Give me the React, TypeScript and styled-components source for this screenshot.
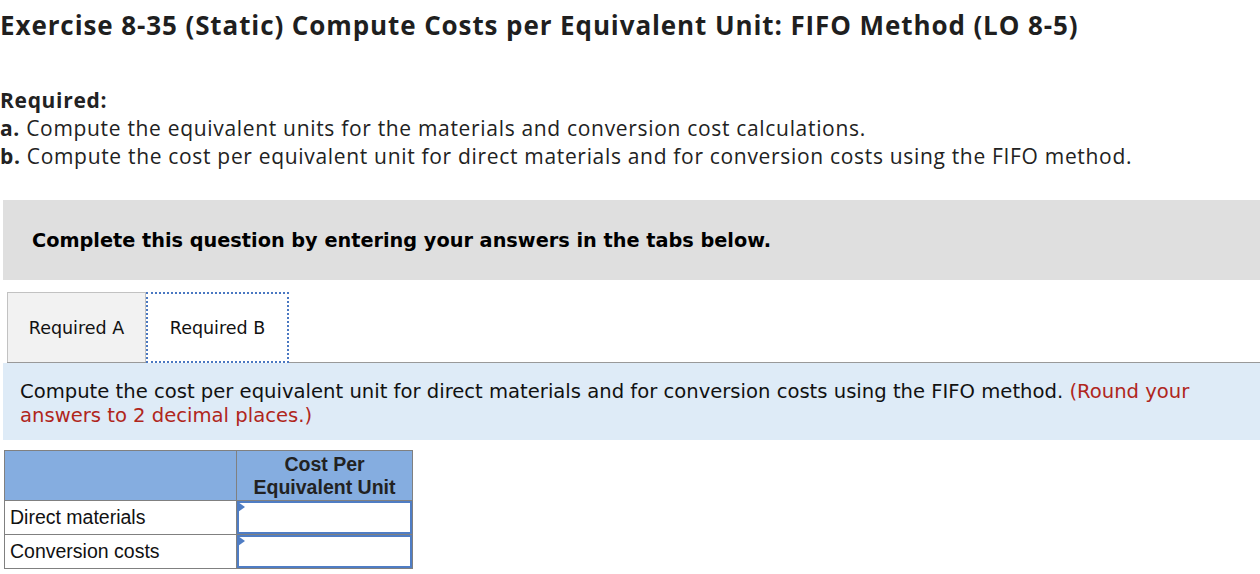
import React from "react";
import styled, { createGlobalStyle } from "styled-components";

const Global = createGlobalStyle`
  html, body { margin: 0; padding: 0; background: #fff; }
  body { font-family: "Open Sans", Arial, sans-serif; color: #222; }
`;

const Page = styled.div`
  width: 1260px;
  overflow: hidden;
`;

const Title = styled.h1`
  margin: 0;
  padding: 8px 0 0 0;
  font-family: "Open Sans", "Lato", sans-serif;
  font-weight: 700;
  font-size: 26px;
  line-height: 34px;
  letter-spacing: 0.9px;
  color: #1f1f1f;
  white-space: nowrap;
`;

const Required = styled.div`
  margin-top: 44px;
  font-family: "Open Sans", "Lato", sans-serif;
  font-size: 21px;
  line-height: 28px;
  letter-spacing: 0.68px;
  color: #222;
  white-space: nowrap;
`;

const Bold = styled.span`
  font-weight: 700;
`;

const Notice = styled.div`
  margin: 30px 0 0 3px;
  height: 80px;
  background: #dfdfdf;
  display: flex;
  align-items: center;
  padding-left: 29px;
  font-family: "DejaVu Sans", Verdana, sans-serif;
  font-weight: 700;
  font-size: 19.3px;
  color: #000;
`;

const TabBar = styled.div`
  margin: 12px 0 0 7px;
  display: flex;
  align-items: flex-end;
  border-bottom: 1px solid #999;
  height: 70px;
`;

const Tab = styled.div<{ $active?: boolean }>`
  box-sizing: border-box;
  width: ${(p) => (p.$active ? 143 : 139)}px;
  height: ${(p) => (p.$active ? 71 : 70)}px;
  display: flex;
  align-items: center;
  justify-content: center;
  font-family: "DejaVu Sans", Verdana, sans-serif;
  font-size: 17.5px;
  color: #111;
  background: ${(p) => (p.$active ? "#fff" : "#f2f2f2")};
  border: ${(p) => (p.$active ? "2px dotted #4a78c2" : "1px solid #c2c2c2")};
  border-bottom: ${(p) => (p.$active ? "2px dotted #4a78c2" : "none")};
  margin-bottom: ${(p) => (p.$active ? "-1px" : "0")};
`;

const Instructions = styled.div`
  margin-left: 3px;
  background: #deebf7;
  height: 77px;
  box-sizing: border-box;
  padding: 17px 40px 0 17px;
  font-family: "DejaVu Sans", Verdana, sans-serif;
  font-size: 19.6px;
  line-height: 24px;
  color: #111;
`;

const Red = styled.span`
  color: #b0261c;
`;

const Table = styled.table`
  margin: 10px 0 0 4px;
  border-collapse: collapse;
  font-family: "Liberation Sans", Arial, sans-serif;
  font-size: 19.5px;
  color: #111;
`;

const HeadCell = styled.th<{ $w: number }>`
  width: ${(p) => p.$w}px;
  height: 50px;
  box-sizing: border-box;
  padding: 0;
  background: #85ade0;
  border: 1px solid #808080;
  font-weight: 700;
  font-size: 19.5px;
  line-height: 23px;
  color: #222;
  text-align: center;
  vertical-align: middle;
`;

const LabelCell = styled.td`
  height: 34px;
  box-sizing: border-box;
  padding: 0 0 0 5px;
  border: 1px solid #808080;
  vertical-align: middle;
`;

const InputCell = styled.td`
  height: 34px;
  box-sizing: border-box;
  padding: 0;
  border: 1px solid #808080;
  position: relative;
`;

const AnswerInput = styled.input`
  display: block;
  box-sizing: border-box;
  width: 100%;
  height: 33px;
  margin: 0;
  border: 2px solid #4f7dc4;
  background: #fff;
  outline: none;
  font-size: 16px;
`;

const Marker = styled.span`
  position: absolute;
  left: 1px;
  top: 1px;
  width: 0;
  height: 0;
  border-top: 5px solid transparent;
  border-bottom: 5px solid transparent;
  border-left: 7px solid #4f7dc4;
`;

const rows = ["Direct materials", "Conversion costs"];

export default function App() {
  return (
    <Page>
      <Global />
      <Title>Exercise 8-35 (Static) Compute Costs per Equivalent Unit: FIFO Method (LO 8-5)</Title>
      <Required>
        <Bold>Required:</Bold>
        <div>
          <Bold>a.</Bold> Compute the equivalent units for the materials and conversion cost calculations.
        </div>
        <div>
          <Bold>b.</Bold> Compute the cost per equivalent unit for direct materials and for conversion costs using the FIFO method.
        </div>
      </Required>
      <Notice>Complete this question by entering your answers in the tabs below.</Notice>
      <TabBar>
        <Tab>Required A</Tab>
        <Tab $active>Required B</Tab>
      </TabBar>
      <Instructions>
        Compute the cost per equivalent unit for direct materials and for conversion costs using the FIFO method.{" "}
        <Red>(Round your answers to 2 decimal places.)</Red>
      </Instructions>
      <Table>
        <thead>
          <tr>
            <HeadCell $w={232} />
            <HeadCell $w={176}>
              Cost Per
              <br />
              Equivalent Unit
            </HeadCell>
          </tr>
        </thead>
        <tbody>
          {rows.map((r) => (
            <tr key={r}>
              <LabelCell>{r}</LabelCell>
              <InputCell>
                <AnswerInput aria-label={r} />
                <Marker />
              </InputCell>
            </tr>
          ))}
        </tbody>
      </Table>
    </Page>
  );
}
